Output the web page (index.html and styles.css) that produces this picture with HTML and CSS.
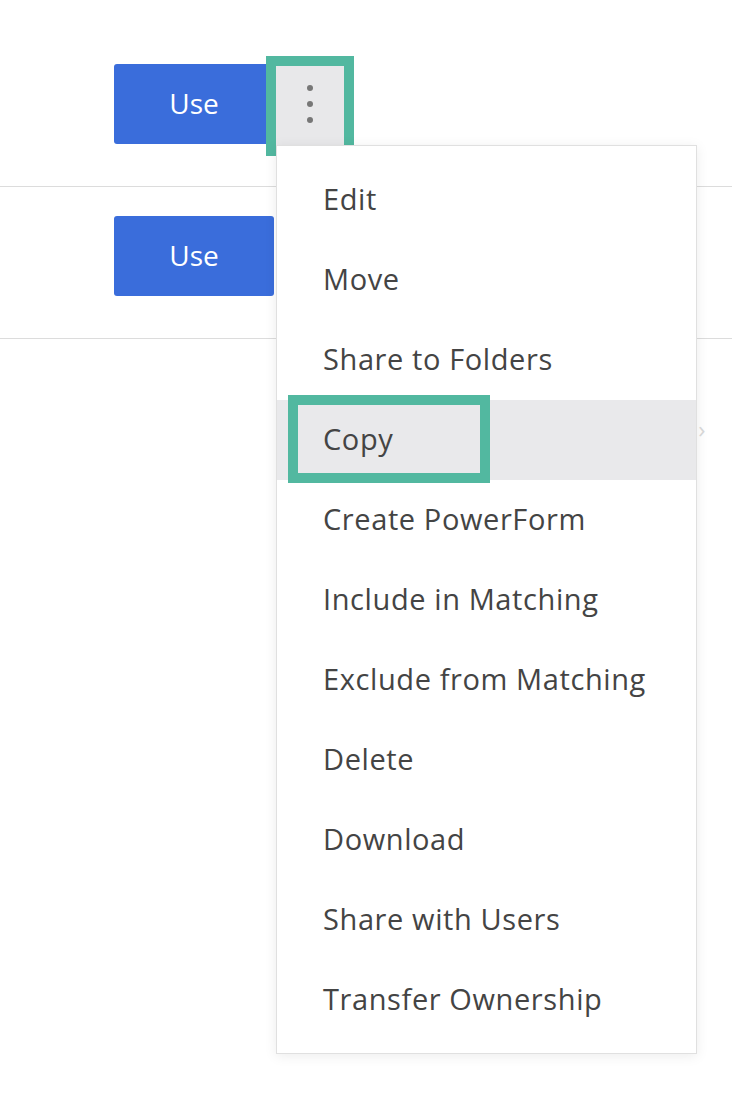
FILE: index.html
```html
<!DOCTYPE html>
<html lang="en">
<head>
  <meta charset="UTF-8" />
  <meta name="viewport" content="width=device-width, initial-scale=1.0"/>
  <title>Templates</title>
  <link rel="stylesheet" href="styles.css">
</head>
<body>

  <div class="list">
    <!-- Row 1 -->
    <div class="row row-first">
      <button class="btn-use">Use</button>
      <button class="btn-more" aria-label="More actions">
        <span class="dot"></span>
        <span class="dot"></span>
        <span class="dot"></span>
      </button>
    </div>

    <!-- Row 2 -->
    <div class="row">
      <button class="btn-use">Use</button>
    </div>
  </div>

  <!-- Dropdown -->
  <ul class="menu">
    <li>Edit</li>
    <li>Move</li>
    <li>Share to Folders</li>
    <li class="active">
      <span class="mark"></span>
      Copy
      <span class="chevron">&#8250;</span>
    </li>
    <li>Create PowerForm</li>
    <li>Include in Matching</li>
    <li>Exclude from Matching</li>
    <li>Delete</li>
    <li>Download</li>
    <li>Share with Users</li>
    <li>Transfer Ownership</li>
  </ul>

</body>
</html>
```

FILE: styles.css
```css
* {
  margin: 0;
  padding: 0;
  box-sizing: border-box;
  font-family: 'Open Sans', 'Liberation Sans', sans-serif;
}

body {
  background: #fff;
  color: #333;
  position: relative;
  min-height: 1118px;
}

.row {
  display: flex;
  align-items: flex-start;
  padding: 29px 0 42px 114px;
  border-bottom: 1px solid #dcdcdc;
}

.row-first {
  padding-top: 64px;
  padding-bottom: 40px;
}

.btn-use {
  width: 160px;
  height: 80px;
  border: none;
  border-radius: 3px;
  background-color: #3a6ddb;
  color: #fff;
  font-size: 28px;
  padding-bottom: 3px;
  cursor: pointer;
}

.btn-more {
  position: relative;
  margin-left: 2px;
  margin-top: 2px;
  width: 68px;
  height: 80px;
  border: none;
  background-color: #e8e8ea;
  outline: 10px solid #52b8a0;
  display: flex;
  flex-direction: column;
  align-items: center;
  justify-content: center;
  gap: 10px;
  padding-bottom: 4px;
  cursor: pointer;
}

.dot {
  width: 6px;
  height: 6px;
  border-radius: 50%;
  background-color: #777;
}

.menu {
  position: absolute;
  left: 276px;
  top: 145px;
  width: 421px;
  list-style: none;
  background: #fff;
  border: 1px solid #e0e0e0;
  box-shadow: 0 2px 12px rgba(0,0,0,0.08);
  padding: 14px 0 13px;
}

.menu li {
  position: relative;
  height: 80px;
  line-height: 78px;
  padding-left: 46px;
  font-size: 29px;
  letter-spacing: 0.6px;
  color: #444;
}

.menu li.active {
  background-color: #e9e9eb;
}

.mark {
  position: absolute;
  left: 11px;
  top: -5px;
  width: 202px;
  height: 88px;
  border: 10px solid #52b8a0;
}

.chevron {
  position: absolute;
  right: -10px;
  top: -10px;
  font-size: 24px;
  color: #d6d6d6;
}
```
